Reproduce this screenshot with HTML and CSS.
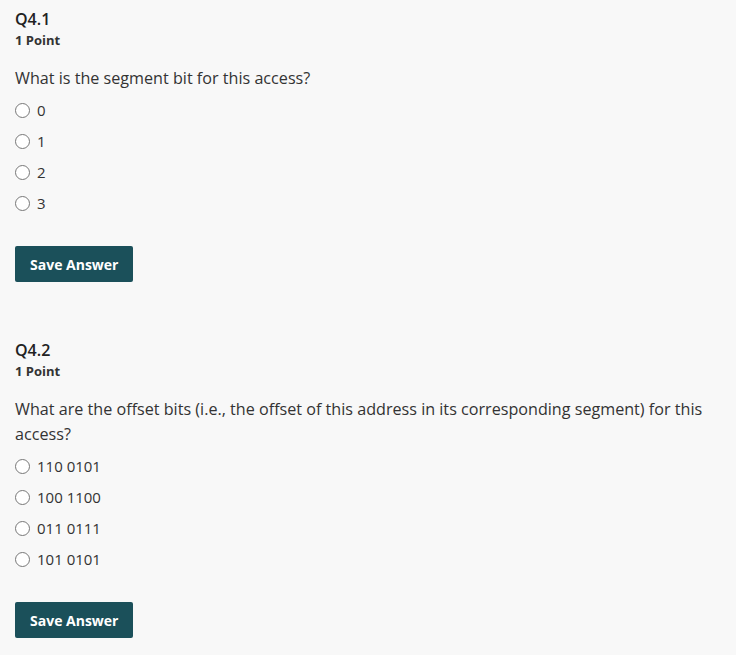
FILE: index.html
```html
<!DOCTYPE html>
<html lang="en">
<head>
    <meta charset="UTF-8">
    <meta name="viewport" content="width=device-width, initial-scale=1.0">
    <title>Q4</title>
    <link rel="stylesheet" href="styles.css">
</head>
<body>
    <div class="container">
        <div class="question">
            <h3 class="q-title">Q4.1</h3>
            <div class="q-points">1 Point</div>
            <p class="q-text">What is the segment bit for this access?</p>
            <div class="options">
                <label class="option"><input type="radio" name="q41"> 0</label>
                <label class="option"><input type="radio" name="q41"> 1</label>
                <label class="option"><input type="radio" name="q41"> 2</label>
                <label class="option"><input type="radio" name="q41"> 3</label>
            </div>
            <button type="button" class="save-btn">Save Answer</button>
        </div>

        <div class="question">
            <h3 class="q-title">Q4.2</h3>
            <div class="q-points">1 Point</div>
            <p class="q-text">What are the offset bits (i.e., the offset of this address in its corresponding segment) for this access?</p>
            <div class="options">
                <label class="option"><input type="radio" name="q42"> 110 0101</label>
                <label class="option"><input type="radio" name="q42"> 100 1100</label>
                <label class="option"><input type="radio" name="q42"> 011 0111</label>
                <label class="option"><input type="radio" name="q42"> 101 0101</label>
            </div>
            <button type="button" class="save-btn">Save Answer</button>
        </div>
    </div>
</body>
</html>
```

FILE: styles.css
```css
body {
    font-family: "Open Sans", "Noto Sans", sans-serif;
    background-color: #f8f8f8;
    color: #333;
    margin: 0;
    padding: 0;
}
.container {
    padding: 8px 15px 0 15px;
    width: 706px;
}
.question {
    margin-bottom: 57px;
}
.q-title {
    margin: 0;
    font-size: 16px;
    font-weight: 600;
    line-height: 22px;
    color: #222;
}
.q-points {
    font-size: 13px;
    font-weight: 700;
    line-height: 18px;
    color: #333;
    margin-top: 1px;
}
.q-text {
    margin: 17px 0 9px 0;
    font-size: 16.15px;
    line-height: 25px;
    color: #333;
}
.options {
    display: flex;
    flex-direction: column;
    gap: 10px;
}
.option {
    display: flex;
    align-items: center;
    gap: 7px;
    font-size: 15px;
    line-height: 21px;
    color: #333;
}
.option input {
    margin: 0;
    width: 15px;
    height: 15px;
}
.save-btn {
    margin-top: 32px;
    padding: 0 15px;
    height: 36px;
    font-family: "Open Sans", "Noto Sans", sans-serif;
    font-size: 14px;
    font-weight: 700;
    color: #fff;
    background: #1b505a;
    border: none;
    border-radius: 2px;
    cursor: pointer;
}
```
